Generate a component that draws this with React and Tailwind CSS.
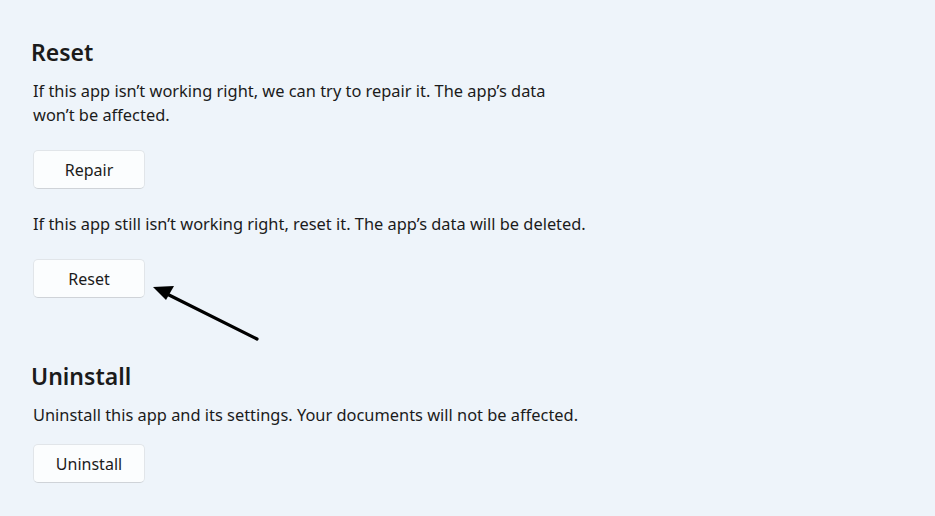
export default function App() {
  return (
    <div className="relative h-[516px] w-[935px] overflow-hidden bg-[#eef4fa] text-[#1b1b1b]" style={{ fontFamily: '"Noto Sans", "Open Sans", sans-serif' }}>
      <div className="flex flex-col pl-[32px] pt-[36px]">
        <Section title="Reset" gap="mt-[11px]">
          <p className="max-w-[530px] text-[16.4px] leading-[24px]">
            If this app isn’t working right, we can try to repair it. The app’s data won’t be affected.
          </p>
          <ActionButton label="Repair" className="mt-[23px]" />
          <p className="mt-[23px] text-[16.4px] leading-[24px]">
            If this app still isn’t working right, reset it. The app’s data will be deleted.
          </p>
          <ActionButton label="Reset" className="mt-[23px]" />
        </Section>
        <Section title="Uninstall" gap="mt-[11px]" className="mt-[62px]">
          <p className="text-[16.4px] leading-[24px]">
            Uninstall this app and its settings. Your documents will not be affected.
          </p>
          <ActionButton label="Uninstall" className="mt-[17px]" />
        </Section>
      </div>
      <svg className="absolute left-0 top-0" width="935" height="516" viewBox="0 0 935 516">
        <line x1="257" y1="339" x2="165" y2="293" stroke="#000" strokeWidth="3.2" strokeLinecap="round" />
        <polygon points="153,287 174,286 166,300" fill="#000" />
      </svg>
    </div>
  );
}

function Section({ title, gap, className = "", children }) {
  return (
    <section className={`flex flex-col items-start ${className}`}>
      <h2 className="-ml-[1px] text-[23px] font-semibold leading-[32px]">{title}</h2>
      <div className={`${gap} flex flex-col items-start pl-[1px]`}>{children}</div>
    </section>
  );
}

function ActionButton({ label, className = "" }) {
  return (
    <button
      type="button"
      className={`h-[39px] w-[112px] rounded-[5px] border border-[#e1e5e9] border-b-[#cfd3d8] bg-[#fbfdfe] text-[16px] text-[#1b1b1b] ${className}`}
    >
      {label}
    </button>
  );
}
